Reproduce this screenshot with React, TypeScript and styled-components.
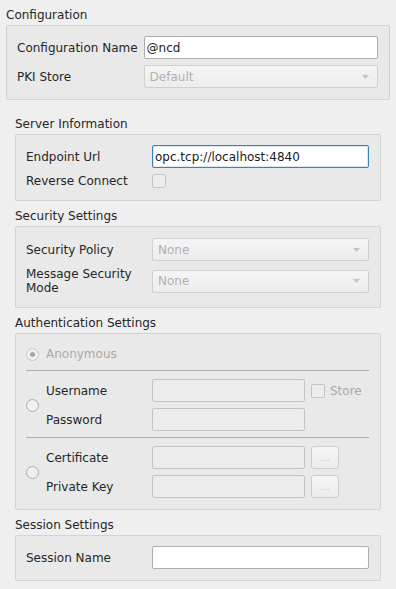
import React from "react";
import styled, { createGlobalStyle } from "styled-components";

const GlobalStyle = createGlobalStyle`
    html, body {
        margin: 0;
        padding: 0;
        background: #efefef;
    }
    body {
        font-family: "DejaVu Sans", "Liberation Sans", sans-serif;
        font-size: 12px;
        color: #262626;
    }
`;

const Page = styled.div`
    width: 396px;
    height: 589px;
    box-sizing: border-box;
    padding: 8px 6px 0;
    overflow: hidden;
`;

const Inner = styled.div`
    margin-top: 17px;
    padding: 0 9px;
    display: flex;
    flex-direction: column;
    gap: 8px;
`;

const GroupTitle = styled.div`
    height: 14px;
    line-height: 14px;
    margin-bottom: 3px;
    white-space: nowrap;
`;

const Frame = styled.div<{ $top?: number; $bottom?: number }>`
    border: 1px solid #d3d3d3;
    border-radius: 2px;
    background: #e9e9e9;
    padding: ${(p) => p.$top ?? 10}px 11px ${(p) => p.$bottom ?? 11}px 10px;
`;

const FormGrid = styled.div<{ $labelWidth?: string }>`
    display: grid;
    grid-template-columns: ${(p) => p.$labelWidth ?? "120px"} 1fr;
    column-gap: 6px;
    row-gap: 6px;
    align-items: center;
`;

const Label = styled.div`
    line-height: 14px;
`;

const DimText = styled.span`
    line-height: 14px;
    color: #a9a9a9;
`;

const Field = styled.input<{ $focused?: boolean }>`
    display: block;
    width: 100%;
    height: 23px;
    box-sizing: border-box;
    margin: 0;
    padding: 0 2px;
    font: inherit;
    color: #1c1c1c;
    background: ${(p) => (p.disabled ? "#ececec" : "#ffffff")};
    border: 1px solid ${(p) => (p.$focused ? "#3584c0" : p.disabled ? "#c3c3c3" : "#adadad")};
    border-radius: 2px;
    box-shadow: ${(p) => (p.$focused ? "inset 0 0 0 1px #d6e8f6" : "none")};
    outline: none;
`;

const Combo = styled.div`
    height: 23px;
    box-sizing: border-box;
    padding: 0 8px 0 5px;
    display: flex;
    align-items: center;
    justify-content: space-between;
    border: 1px solid #d0d0d0;
    border-radius: 2px;
    background: linear-gradient(#f5f5f5, #ececec);
    color: #b1b1b1;
`;

const Check = styled.span`
    display: block;
    width: 14px;
    height: 14px;
    box-sizing: border-box;
    border: 1px solid #c4c4c4;
    border-radius: 2px;
    background: #ededed;
`;

const Radio = styled.span<{ $checked?: boolean; $dim?: boolean }>`
    flex: none;
    width: 13px;
    height: 13px;
    box-sizing: border-box;
    border-radius: 50%;
    border: 1px solid ${(p) => (p.$dim ? "#c6c6c6" : "#acacac")};
    background: #f0f0f0;
    display: flex;
    align-items: center;
    justify-content: center;
    &::after {
        content: "";
        display: ${(p) => (p.$checked ? "block" : "none")};
        width: 5px;
        height: 5px;
        border-radius: 50%;
        background: #a6a6a6;
    }
`;

const AnonRow = styled.div`
    height: 20px;
    display: flex;
    align-items: center;
    gap: 7px;
`;

const Rule = styled.div`
    height: 1px;
    background: #ababab;
    margin: 6px 0 8px;
`;

const Choice = styled.div`
    display: flex;
    align-items: center;
    gap: 7px;
`;

const ChoiceGrid = styled.div`
    flex: 1;
    display: grid;
    grid-template-columns: 100px 1fr 58px;
    grid-auto-rows: 23px;
    column-gap: 6px;
    row-gap: 6px;
    align-items: center;
`;

const StoreBox = styled.div`
    display: flex;
    align-items: center;
    gap: 5px;
`;

const Browse = styled.div`
    width: 28px;
    height: 23px;
    box-sizing: border-box;
    border: 1px solid #cdcdcd;
    border-radius: 3px;
    background: linear-gradient(#f6f6f6, #ececec);
    color: #bdbdbd;
    font-size: 9px;
    display: flex;
    align-items: center;
    justify-content: center;
    letter-spacing: 0.5px;
`;

const Arrow = () => (
    <svg width="7" height="4" viewBox="0 0 7 4">
        <path d="M0 0 L7 0 L3.5 4 Z" fill="#c4c4c4" />
    </svg>
);

const Select = ({ value }: { value: string }) => (
    <Combo>
        <span>{value}</span>
        <Arrow />
    </Combo>
);

const Group = ({ title, children }: { title: string; children: React.ReactNode }) => (
    <div>
        <GroupTitle>{title}</GroupTitle>
        {children}
    </div>
);

export default function App() {
    return (
        <Page>
            <GlobalStyle />
            <Group title="Configuration">
                <Frame>
                    <FormGrid $labelWidth="auto">
                        <Label>Configuration Name</Label>
                        <Field defaultValue="@ncd" />
                        <Label>PKI Store</Label>
                        <Select value="Default" />
                    </FormGrid>
                </Frame>
            </Group>
            <Inner>
                <Group title="Server Information">
                    <Frame $bottom={12}>
                        <FormGrid>
                            <Label>Endpoint Url</Label>
                            <Field $focused defaultValue="opc.tcp://localhost:4840" />
                            <Label>Reverse Connect</Label>
                            <Check />
                        </FormGrid>
                    </Frame>
                </Group>
                <Group title="Security Settings">
                    <Frame $top={11} $bottom={12}>
                        <FormGrid>
                            <Label>Security Policy</Label>
                            <Select value="None" />
                            <Label>Message Security Mode</Label>
                            <Select value="None" />
                        </FormGrid>
                    </Frame>
                </Group>
                <Group title="Authentication Settings">
                    <Frame>
                        <AnonRow>
                            <Radio $checked $dim />
                            <DimText>Anonymous</DimText>
                        </AnonRow>
                        <Rule />
                        <Choice>
                            <Radio />
                            <ChoiceGrid>
                                <Label>Username</Label>
                                <Field disabled />
                                <StoreBox>
                                    <Check />
                                    <DimText>Store</DimText>
                                </StoreBox>
                                <Label>Password</Label>
                                <Field disabled type="password" />
                                <span />
                            </ChoiceGrid>
                        </Choice>
                        <Rule />
                        <Choice>
                            <Radio />
                            <ChoiceGrid>
                                <Label>Certificate</Label>
                                <Field disabled />
                                <Browse>...</Browse>
                                <Label>Private Key</Label>
                                <Field disabled />
                                <Browse>...</Browse>
                            </ChoiceGrid>
                        </Choice>
                    </Frame>
                </Group>
                <Group title="Session Settings">
                    <Frame>
                        <FormGrid>
                            <Label>Session Name</Label>
                            <Field />
                        </FormGrid>
                    </Frame>
                </Group>
            </Inner>
        </Page>
    );
}
